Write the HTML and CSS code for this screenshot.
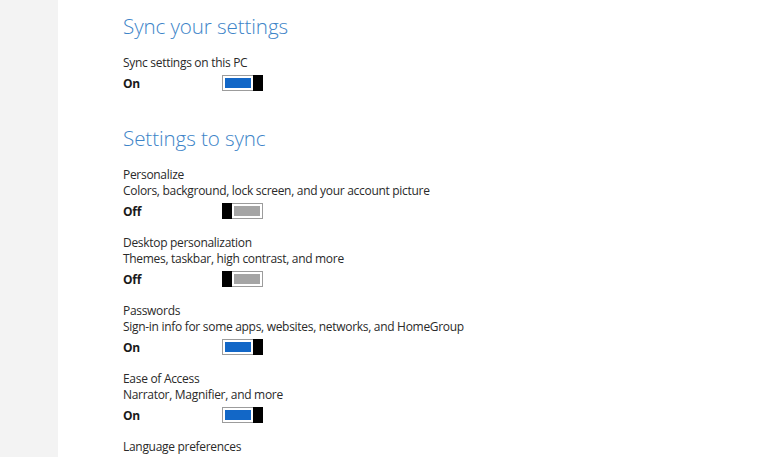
FILE: index.html
```html
<!DOCTYPE html>
<html>
<head>
<meta charset="utf-8">
<link rel="stylesheet" href="styles.css">
</head>
<body>
<div class="page">
  <aside class="side"></aside>
  <main class="main">
    <h2 class="heading">Sync your settings</h2>
    <div class="item">
      <div class="title">Sync settings on this PC</div>
      <div class="state"><span class="state-label">On</span><span class="toggle on"><span class="fill"></span><span class="thumb"></span></span></div>
    </div>

    <h2 class="heading second">Settings to sync</h2>
    <div class="item">
      <div class="title">Personalize</div>
      <div class="desc">Colors, background, lock screen, and your account picture</div>
      <div class="state"><span class="state-label">Off</span><span class="toggle off"><span class="thumb"></span><span class="fill"></span></span></div>
    </div>
    <div class="item">
      <div class="title">Desktop personalization</div>
      <div class="desc">Themes, taskbar, high contrast, and more</div>
      <div class="state"><span class="state-label">Off</span><span class="toggle off"><span class="thumb"></span><span class="fill"></span></span></div>
    </div>
    <div class="item">
      <div class="title">Passwords</div>
      <div class="desc">Sign-in info for some apps, websites, networks, and HomeGroup</div>
      <div class="state"><span class="state-label">On</span><span class="toggle on"><span class="fill"></span><span class="thumb"></span></span></div>
    </div>
    <div class="item">
      <div class="title">Ease of Access</div>
      <div class="desc">Narrator, Magnifier, and more</div>
      <div class="state"><span class="state-label">On</span><span class="toggle on"><span class="fill"></span><span class="thumb"></span></span></div>
    </div>
    <div class="item">
      <div class="title">Language preferences</div>
    </div>
  </main>
</div>
</body>
</html>
```

FILE: styles.css
```css
html, body {
  margin: 0;
  padding: 0;
  background: #ffffff;
  height: 100%;
  overflow: hidden;
}
.page {
  display: flex;
  height: 457px;
  font-family: "Segoe UI", "Open Sans", "Noto Sans", sans-serif;
  color: #2a2a2a;
}
.side {
  width: 58px;
  flex: none;
  background: #f3f3f3;
}
.main {
  padding: 11px 0 0 65px;
}
.heading {
  margin: 0 0 13px 0;
  font-size: 20.6px;
  line-height: 30px;
  font-weight: 300;
  letter-spacing: -0.1px;
  color: #3d84c8;
}
.heading.second {
  margin-top: 32px;
}
.item {
  margin-bottom: 15px;
  padding-top: 1px;
}
.title, .desc {
  font-size: 12px;
  line-height: 16px;
  letter-spacing: -0.3px;
  color: #2a2a2a;
}
.state {
  display: flex;
  align-items: center;
  margin-top: 4px;
  height: 16px;
}
.state-label {
  width: 99px;
  font-size: 12px;
  font-weight: 700;
  letter-spacing: -0.2px;
  color: #1a1a1a;
}
.toggle {
  display: flex;
  width: 41px;
  height: 16px;
  box-sizing: border-box;
}
.toggle .fill {
  flex: 1;
  border: 1px solid #9c9c9c;
  box-shadow: inset 0 0 0 2px #ffffff;
}
.toggle.on .fill {
  background: #1267c7;
  border-right: none;
}
.toggle.off .fill {
  background: #a5a5a5;
  border-left: none;
}
.toggle .thumb {
  width: 10px;
  background: #000000;
}
```
